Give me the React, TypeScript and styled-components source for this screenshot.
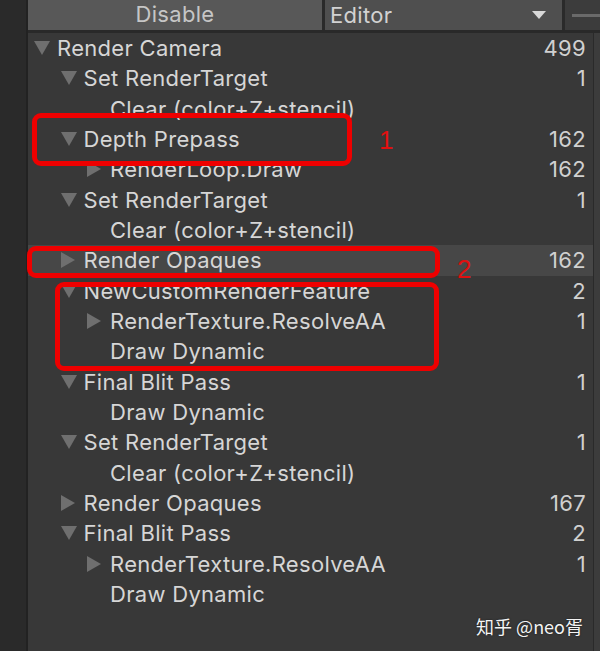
import { createGlobalStyle } from 'styled-components';
import styled from 'styled-components';

const GlobalStyle = createGlobalStyle`
  html, body {
    margin: 0;
    padding: 0;
    background: #383838;
  }
  body {
    font-family: Inter, "Noto Sans", "Noto Sans CJK SC", sans-serif;
  }
`;

type Arrow = 'down' | 'right' | 'none';

interface Row {
  name: string;
  level: number;
  arrow: Arrow;
  count?: string;
  selected?: boolean;
}

const rows: Row[] = [
  { name: 'Render Camera', level: 0, arrow: 'down', count: '499' },
  { name: 'Set RenderTarget', level: 1, arrow: 'down', count: '1' },
  { name: 'Clear (color+Z+stencil)', level: 2, arrow: 'none' },
  { name: 'Depth Prepass', level: 1, arrow: 'down', count: '162' },
  { name: 'RenderLoop.Draw', level: 2, arrow: 'right', count: '162' },
  { name: 'Set RenderTarget', level: 1, arrow: 'down', count: '1' },
  { name: 'Clear (color+Z+stencil)', level: 2, arrow: 'none' },
  { name: 'Render Opaques', level: 1, arrow: 'right', count: '162', selected: true },
  { name: 'NewCustomRenderFeature', level: 1, arrow: 'down', count: '2' },
  { name: 'RenderTexture.ResolveAA', level: 2, arrow: 'right', count: '1' },
  { name: 'Draw Dynamic', level: 2, arrow: 'none' },
  { name: 'Final Blit Pass', level: 1, arrow: 'down', count: '1' },
  { name: 'Draw Dynamic', level: 2, arrow: 'none' },
  { name: 'Set RenderTarget', level: 1, arrow: 'down', count: '1' },
  { name: 'Clear (color+Z+stencil)', level: 2, arrow: 'none' },
  { name: 'Render Opaques', level: 1, arrow: 'right', count: '167' },
  { name: 'Final Blit Pass', level: 1, arrow: 'down', count: '2' },
  { name: 'RenderTexture.ResolveAA', level: 2, arrow: 'right', count: '1' },
  { name: 'Draw Dynamic', level: 2, arrow: 'none' },
];

const App = () => {
  return (
    <Page>
      <GlobalStyle />
      <LeftStrip />
      <Main>
        <Toolbar>
          <DisableButton>Disable</DisableButton>
          <Dropdown>
            <span>Editor</span>
            <svg width="14" height="8" viewBox="0 0 14 8">
              <path d="M0 0 L14 0 L7 8 Z" fill="#d8d8d8" />
            </svg>
          </Dropdown>
          <ToolbarRest>
            <Dash />
          </ToolbarRest>
        </Toolbar>
        <Body>
          <Tree>
            {rows.map((row, i) => (
              <TreeRow key={i} selected={row.selected}>
                <Label level={row.level}>
                  <Foldout>
                    {row.arrow === 'down' && (
                      <svg width="16" height="14" viewBox="0 0 16 14">
                        <path d="M0 0 L16 0 L8 14 Z" fill="#6f6f6f" />
                      </svg>
                    )}
                    {row.arrow === 'right' && (
                      <svg width="14" height="16" viewBox="0 0 14 16">
                        <path d="M0 0 L14 8 L0 16 Z" fill="#6f6f6f" />
                      </svg>
                    )}
                  </Foldout>
                  <Name>{row.name}</Name>
                </Label>
                <Count>{row.count}</Count>
              </TreeRow>
            ))}
          </Tree>
          <ScrollTrack />
        </Body>
      </Main>

      <Marker style={{ left: 32, top: 113, width: 320, height: 53 }} />
      <MarkerLabel style={{ left: 379, top: 125 }}>1</MarkerLabel>
      <Marker style={{ left: 27, top: 246, width: 413, height: 32 }} />
      <MarkerLabel style={{ left: 457, top: 254 }}>2</MarkerLabel>
      <Marker style={{ left: 55, top: 282, width: 384, height: 89 }} />

      <Watermark>知乎 @neo胥</Watermark>
    </Page>
  );
};

export default App;

const Page = styled.div`
  position: relative;
  display: flex;
  width: 600px;
  height: 651px;
  overflow: hidden;
  background: #383838;
`;

const LeftStrip = styled.div`
  width: 26px;
  flex-shrink: 0;
  background: #2a2a2a;
  border-right: 2px solid #222222;
`;

const Main = styled.div`
  flex: 1;
  display: flex;
  flex-direction: column;
  min-width: 0;
`;

const Toolbar = styled.div`
  display: flex;
  height: 30px;
  gap: 3px;
  background: #2a2a2a;
  border-bottom: 3px solid #292929;
`;

const DisableButton = styled.div`
  width: 294px;
  background: #585858;
  color: #c6c6c6;
  font-size: 22px;
  letter-spacing: 0.3px;
  line-height: 28px;
  text-align: center;
`;

const Dropdown = styled.div`
  width: 237px;
  background: #4f4f4f;
  color: #d2d2d2;
  font-size: 22px;
  letter-spacing: 0.3px;
  line-height: 28px;
  display: flex;
  align-items: center;
  justify-content: space-between;
  padding: 0 16px 0 5px;
  box-sizing: border-box;
`;

const ToolbarRest = styled.div`
  flex: 1;
  background: #3c3c3c;
  display: flex;
  align-items: center;
  padding-left: 7px;
`;

const Dash = styled.div`
  flex: 1;
  height: 3px;
  background: #6a6a6a;
`;

const Body = styled.div`
  flex: 1;
  display: flex;
`;

const Tree = styled.div`
  flex: 1;
  display: flex;
  flex-direction: column;
`;

const TreeRow = styled.div<{ selected?: boolean }>`
  height: 30.33px;
  display: flex;
  align-items: center;
  justify-content: space-between;
  padding-right: 7px;
  background: ${(p) => (p.selected ? '#474747' : 'transparent')};
  color: #d6d6d6;
  font-size: 22px;
  letter-spacing: 0.3px;
`;

const Label = styled.div<{ level: number }>`
  display: flex;
  align-items: center;
  padding-left: ${(p) => 5 + p.level * 26.5}px;
`;

const Foldout = styled.div`
  width: 23px;
  display: flex;
  align-items: center;
  padding-left: 1px;
`;

const Name = styled.span`
  white-space: nowrap;
`;

const Count = styled.span`
  color: #d0d0d0;
`;

const ScrollTrack = styled.div`
  width: 6px;
  background: #3c3c3c;
  border-left: 1px solid #2a2a2a;
`;

const Marker = styled.div`
  position: absolute;
  box-sizing: border-box;
  border: 5px solid #ee0000;
  border-radius: 9px;
`;

const MarkerLabel = styled.div`
  position: absolute;
  color: #e01010;
  font-family: "Liberation Sans", Arial, sans-serif;
  font-size: 26px;
  line-height: 30px;
`;

const Watermark = styled.div`
  position: absolute;
  right: 17px;
  bottom: 12px;
  color: #f4f4f4;
  font-family: "Noto Sans CJK SC", "Noto Sans", sans-serif;
  font-size: 18px;
  text-shadow: 0 0 2px rgba(0, 0, 0, 0.6);
`;
